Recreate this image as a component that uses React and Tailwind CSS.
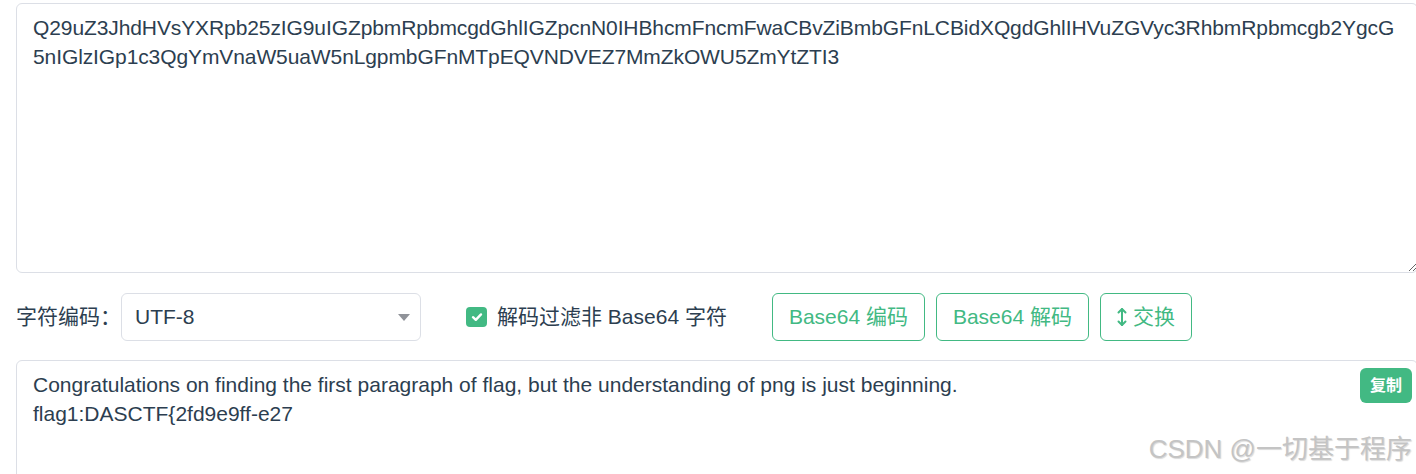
const source =
  "Q29uZ3JhdHVsYXRpb25zIG9uIGZpbmRpbmcgdGhlIGZpcnN0IHBhcmFncmFwaCBvZiBmbGFnLCBidXQgdGhlIHVuZGVyc3RhbmRpbmcgb2YgcG5nIGlzIGp1c3QgYmVnaW5uaW5nLgpmbGFnMTpEQVNDVEZ7MmZkOWU5ZmYtZTI3";

function SwapIcon() {
  return (
    <svg width="10" height="20" viewBox="0 0 10 20" fill="none" stroke="#42b983" strokeWidth="2" strokeLinecap="round" strokeLinejoin="round">
      <path d="M5 2v16" />
      <path d="M1.5 5.5L5 2l3.5 3.5" />
      <path d="M1.5 14.5L5 18l3.5-3.5" />
    </svg>
  );
}

export default function App() {
  return (
    <div
      className="relative w-full h-[474px] overflow-hidden bg-white text-[#2c3e50]"
      style={{ fontFamily: '"Liberation Sans", "Noto Sans CJK SC", sans-serif' }}
    >
      <div className="pl-4 pt-[3px]">
        <textarea
          className="block w-[1402px] h-[270px] border border-[#dcdfe6] rounded-md px-4 py-[9px] text-[21px] leading-[1.4] tracking-[-0.1px] text-[#2c3e50] outline-none resize-y break-all"
          defaultValue={source}
          spellCheck={false}
        />

        <div className="flex items-center h-[48px] mt-[20px]">
          <span className="text-[21px]">字符编码：</span>
          <div className="flex items-center justify-between w-[300px] h-[48px] border border-[#dcdfe6] rounded-md pl-[13px] pr-[10px]">
            <span className="text-[21px]">UTF-8</span>
            <span className="w-0 h-0 border-l-[6px] border-r-[6px] border-t-[7px] border-l-transparent border-r-transparent border-t-[#909399]" />
          </div>

          <label className="flex items-center ml-[45px]">
            <span className="flex items-center justify-center w-[21px] h-[20px] rounded-[4px] bg-[#42b983]">
              <svg width="12" height="10" viewBox="0 0 12 10" fill="none" stroke="white" strokeWidth="2.4" strokeLinecap="round" strokeLinejoin="round">
                <path d="M2 5.2l2.8 2.6L10 2.4" />
              </svg>
            </span>
            <span className="ml-[10px] text-[21px]">解码过滤非 Base64 字符</span>
          </label>

          <div className="flex items-center gap-[11px] ml-[45px]">
            <button className="h-[48px] w-[153px] border border-[#42b983] rounded-md text-[21px] text-[#42b983] bg-white">
              Base64 编码
            </button>
            <button className="h-[48px] w-[153px] border border-[#42b983] rounded-md text-[21px] text-[#42b983] bg-white">
              Base64 解码
            </button>
            <button className="flex items-center justify-center gap-[6px] h-[48px] w-[92px] border border-[#42b983] rounded-md text-[21px] text-[#42b983] bg-white">
              <SwapIcon />
              <span>交换</span>
            </button>
          </div>
        </div>

        <div className="relative mt-[19px] w-[1402px] h-[150px] border border-[#dcdfe6] rounded-md px-4 py-[9px] text-[21px] leading-[1.4] whitespace-pre-wrap">
          {"Congratulations on finding the first paragraph of flag, but the understanding of png is just beginning.\nflag1:DASCTF{2fd9e9ff-e27"}
          <button className="absolute top-[7px] right-[5px] w-[52px] h-[35px] rounded-md bg-[#42b983] text-white text-[16px] font-bold leading-none">
            复制
          </button>
        </div>
      </div>

      <div
        className="absolute right-[4px] bottom-[12px] text-[26px] leading-none text-[#c4c4c4]"
        style={{ textShadow: "1px 1px 1px rgba(0,0,0,0.15)" }}
      >
        CSDN @一切基于程序
      </div>
    </div>
  );
}
